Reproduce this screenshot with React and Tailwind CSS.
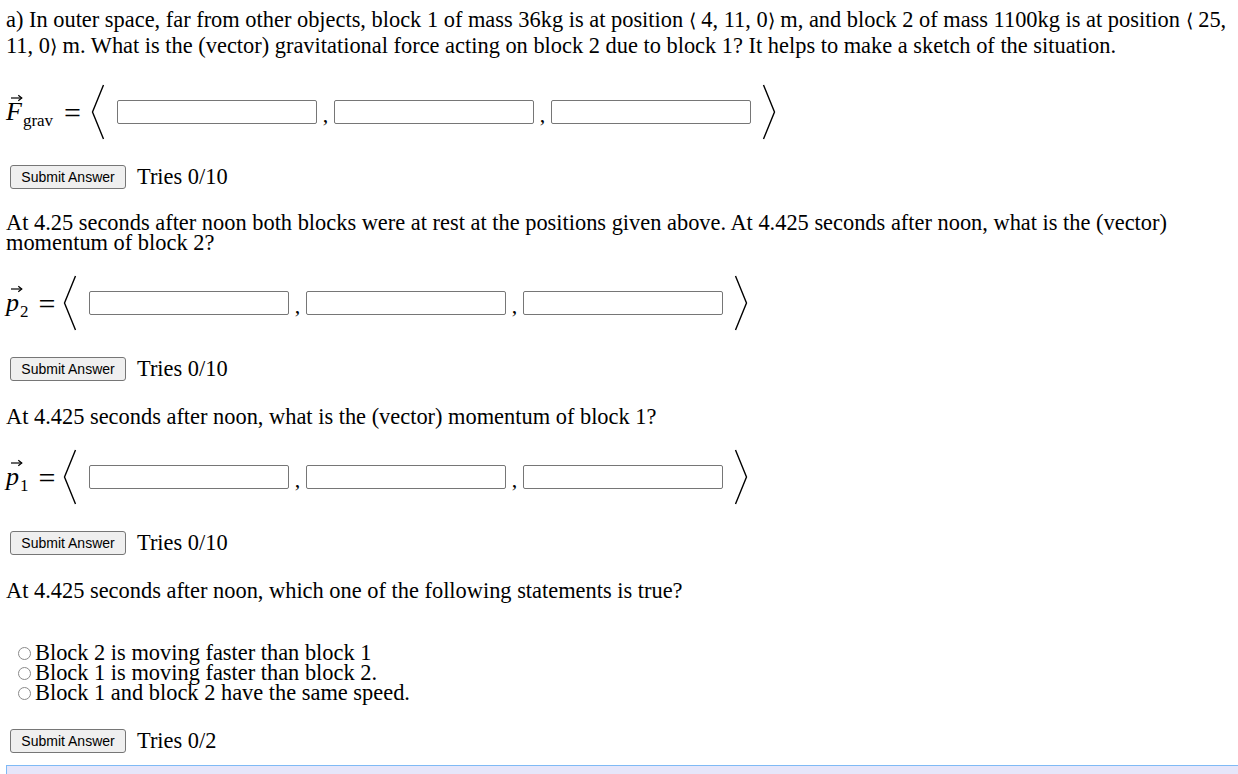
import React from 'react';

const serif = "font-['Liberation_Serif',serif]";

const Angle = ({ side }) => (
  <svg width="14" height="56" viewBox="0 0 14 56" className="shrink-0">
    {side === 'left' ? (
      <polyline points="12.5,1 1.5,28 12.5,55" fill="none" stroke="#000" strokeWidth="1.4" />
    ) : (
      <polyline points="1.5,1 12.5,28 1.5,55" fill="none" stroke="#000" strokeWidth="1.4" />
    )}
  </svg>
);

const Vec = ({ letter, sub }) => (
  <span className="relative inline-flex items-baseline">
    <span className="relative italic text-[26px] leading-none">
      {letter}
      <svg width="13" height="8" viewBox="0 0 13 8" className="absolute left-[4px] top-[-5px]">
        <line x1="1" y1="4" x2="11.5" y2="4" stroke="#000" strokeWidth="1.2" />
        <polyline points="8.3,1.2 11.8,4 8.3,6.8" fill="none" stroke="#000" strokeWidth="1.2" />
      </svg>
    </span>
    <span className="relative top-[6px] ml-[1px] text-[17px] leading-none">{sub}</span>
  </span>
);

const Field = () => (
  <input
    type="text"
    className="w-[200px] h-[24px] bg-white border border-[#767676] rounded-[2px] shrink-0"
  />
);

const Comma = () => (
  <span className="w-[17px] text-center text-[22px] leading-none relative top-[3px]">,</span>
);

const VectorRow = ({ label, labelWidth, className }) => (
  <div className={`flex items-center h-[56px] ${className}`}>
    <div className={`flex items-center ${labelWidth}`}>{label}</div>
    <Angle side="left" />
    <div className="w-[12px]" />
    <Field />
    <Comma />
    <Field />
    <Comma />
    <Field />
    <div className="w-[11px]" />
    <Angle side="right" />
  </div>
);

const SubmitRow = ({ tries, className }) => (
  <div className={`flex items-center h-[24px] ${className}`}>
    <button className="ml-[4px] w-[116px] h-[24px] bg-[#efefef] border border-[#767676] rounded-[3px] text-[14px] text-black font-['Liberation_Sans',Arial,sans-serif] leading-none">
      Submit Answer
    </button>
    <span className="ml-[11px] text-[22.4px] leading-none">Tries {tries}</span>
  </div>
);

const Options = () => {
  const opts = [
    'Block 2 is moving faster than block 1',
    'Block 1 is moving faster than block 2.',
    'Block 1 and block 2 have the same speed.',
  ];
  return (
    <div className="mt-[42px]">
      {opts.map((o, i) => (
        <label key={i} className="flex items-center h-[20px] text-[22.4px] leading-[20px]">
          <input
            type="radio"
            name="q4"
            className="appearance-none w-[13px] h-[13px] rounded-full border border-[#8a8a8a] bg-white ml-[12px] mr-[4px] shrink-0"
          />
          {o}
        </label>
      ))}
    </div>
  );
};

const Br = ({ c }) => <span className="font-['DejaVu_Sans',sans-serif] text-[19px] font-light">{c}</span>;

const Eq = ({ className }) => <span className={`text-[30px] leading-none relative top-[1px] ${className}`}>=</span>;

export default function App() {
  return (
    <div className={`${serif} text-black bg-white min-h-[774px] w-[1238px] overflow-hidden pl-[6px]`}>
      <p className="pt-[7px] text-[22.4px] leading-[25px] pr-[2px]">
        a) In outer space, far from other objects, block 1 of mass 36kg is at position <Br c="⟨" /> 4, 11, 0
        <Br c="⟩" /> m, and block 2 of mass 1100kg is at position <Br c="⟨" /> 25, 11, 0<Br c="⟩" /> m. What is the
        (vector) gravitational force acting on block 2 due to block 1? It helps to make a sketch of the situation.
      </p>

      <VectorRow
        className="mt-[25px]"
        labelWidth="w-[85px]"
        label={
          <>
            <Vec letter="F" sub="grav" />
            <Eq className="ml-[11px]" />
          </>
        }
      />
      <SubmitRow className="mt-[25px]" tries="0/10" />

      <p className="mt-[24px] text-[22.4px] leading-[20px]">
        At 4.25 seconds after noon both blocks were at rest at the positions given above. At 4.425 seconds after noon,
        what is the (vector) momentum of block 2?
      </p>
      <VectorRow
        className="mt-[22px]"
        labelWidth="w-[57px]"
        label={
          <>
            <Vec letter="p" sub="2" />
            <Eq className="ml-[10px]" />
          </>
        }
      />
      <SubmitRow className="mt-[26px]" tries="0/10" />

      <p className="mt-[26px] text-[22.4px] leading-[20px]">
        At 4.425 seconds after noon, what is the (vector) momentum of block 1?
      </p>
      <VectorRow
        className="mt-[22px]"
        labelWidth="w-[57px]"
        label={
          <>
            <Vec letter="p" sub="1" />
            <Eq className="ml-[10px]" />
          </>
        }
      />
      <SubmitRow className="mt-[26px]" tries="0/10" />

      <p className="mt-[26px] text-[22.4px] leading-[20px]">
        At 4.425 seconds after noon, which one of the following statements is true?
      </p>
      <Options />
      <SubmitRow className="mt-[26px]" tries="0/2" />

      <div className="mt-[12px] h-[40px] -mr-[10px] bg-[#e6e6fa] border border-[#7fbaf5]" />
    </div>
  );
}
